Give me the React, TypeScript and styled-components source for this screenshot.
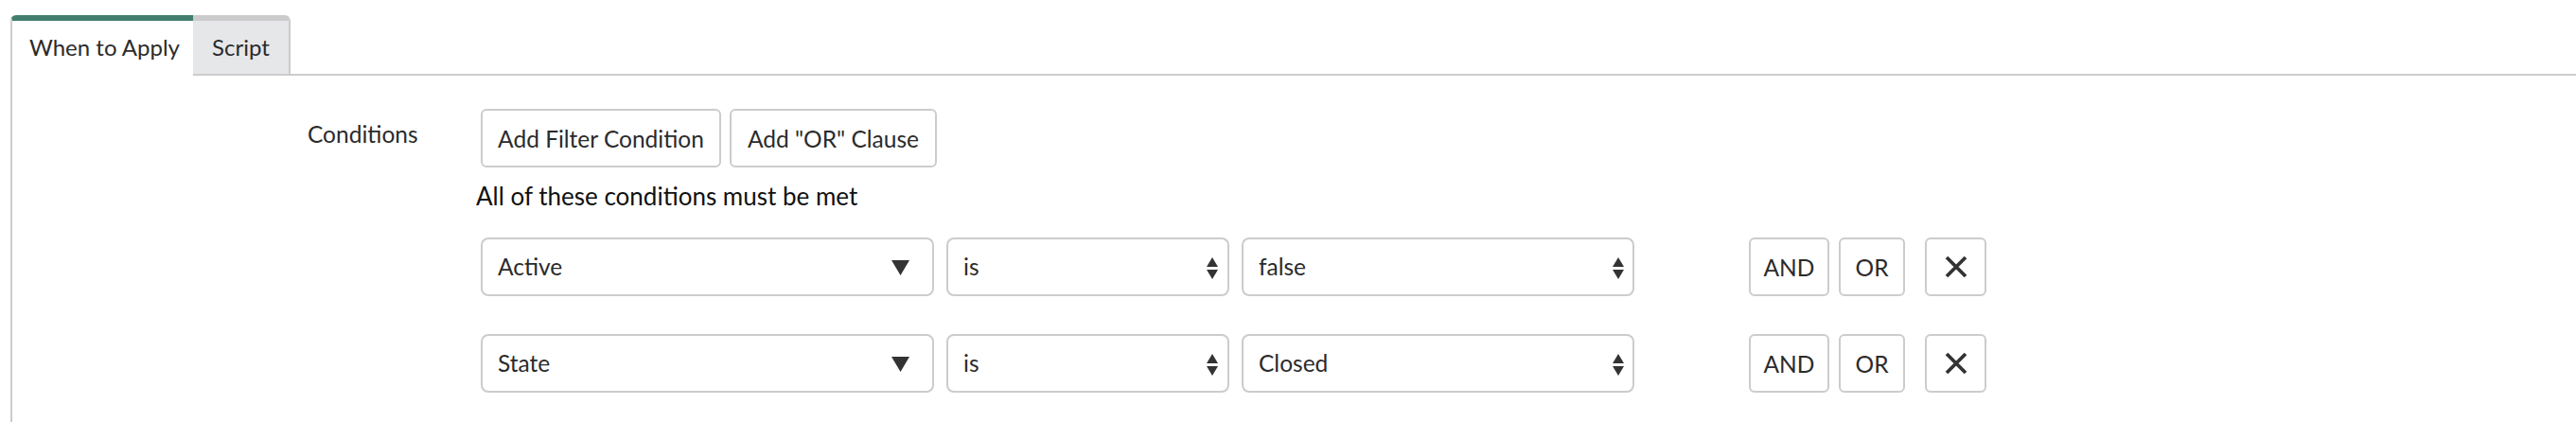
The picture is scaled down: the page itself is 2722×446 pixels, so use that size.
import styled, { createGlobalStyle } from 'styled-components';

const GlobalStyle = createGlobalStyle`
  html, body {
    margin: 0;
    background: #fff;
  }
  body {
    font-family: Lato, 'Open Sans', sans-serif;
    color: #2b2b2b;
  }
`;

interface Condition {
  field: string;
  operator: string;
  value: string;
}

const conditions: Condition[] = [
  { field: 'Active', operator: 'is', value: 'false' },
  { field: 'State', operator: 'is', value: 'Closed' },
];

const tabs = [
  { label: 'When to Apply', width: 193, active: true },
  { label: 'Script', width: 103, active: false },
];

function CaretDown() {
  return (
    <svg width='19' height='16' viewBox='0 0 19 16'>
      <path d='M0 0 H19 L9.5 16 Z' fill='#333' />
    </svg>
  );
}

function UpDown() {
  return (
    <svg width='12' height='23' viewBox='0 0 12 23'>
      <path d='M6 0 L12 10 H0 Z' fill='#333' />
      <path d='M0 13 H12 L6 23 Z' fill='#333' />
    </svg>
  );
}

function Cross() {
  return (
    <svg width='24' height='24' viewBox='0 0 24 24'>
      <path d='M2 2 L22 22 M22 2 L2 22' stroke='#333' strokeWidth='3.8' />
    </svg>
  );
}

export default function App() {
  return (
    <>
      <GlobalStyle />
      <Page>
        <TabBar>
          {tabs.map((tab) => (
            <Tab key={tab.label} $active={tab.active} $width={tab.width}>
              {tab.label}
            </Tab>
          ))}
          <TabFiller />
        </TabBar>

        <Panel>
          <Label>Conditions</Label>
          <Field>
            <ButtonRow>
              <Button $width={254}>Add Filter Condition</Button>
              <Button $width={219}>Add "OR" Clause</Button>
            </ButtonRow>
            <Hint>All of these conditions must be met</Hint>
            <Rows>
              {conditions.map((c) => (
                <ConditionRow key={c.field}>
                  <Select $width={479} $padRight={24}>
                    <span>{c.field}</span>
                    <CaretDown />
                  </Select>
                  <Select $width={299} $padRight={10}>
                    <span>{c.operator}</span>
                    <UpDown />
                  </Select>
                  <Select $width={415} $padRight={9}>
                    <span>{c.value}</span>
                    <UpDown />
                  </Select>
                  <Actions>
                    <Button $width={85}>AND</Button>
                    <Button $width={70}>OR</Button>
                    <DeleteButton>
                      <Cross />
                    </DeleteButton>
                  </Actions>
                </ConditionRow>
              ))}
            </Rows>
          </Field>
        </Panel>
      </Page>
    </>
  );
}

const Page = styled.div`
  box-sizing: border-box;
  height: 446px;
  padding: 16px 0 0 11px;
  display: flex;
  flex-direction: column;
  overflow: hidden;
`;

const TabBar = styled.div`
  display: flex;
  height: 64px;
`;

interface TabProps {
  $active: boolean;
  $width: number;
}

const Tab = styled.div<TabProps>`
  box-sizing: border-box;
  width: ${(p) => p.$width}px;
  height: 64px;
  display: flex;
  align-items: center;
  font-size: 24px;
  color: #2b2b2b;
  background: ${(p) => (p.$active ? '#fff' : '#e6e7e9')};
  border-top: 6px solid ${(p) => (p.$active ? '#417e6f' : '#cbcbcb')};
  border-left: ${(p) => (p.$active ? '2px solid #ccc' : 'none')};
  border-right: ${(p) => (p.$active ? 'none' : '2px solid #ccc')};
  border-bottom: ${(p) => (p.$active ? 'none' : '2px solid #ccc')};
  border-radius: ${(p) => (p.$active ? '6px 0 0 0' : '0 6px 0 0')};
  padding-left: ${(p) => (p.$active ? 18 : 20)}px;
  padding-bottom: ${(p) => (p.$active ? 3 : 1)}px;
`;

const TabFiller = styled.div`
  flex: 1;
  border-bottom: 2px solid #ccc;
`;

const Panel = styled.div`
  flex: 1;
  border-left: 2px solid #ccc;
  display: grid;
  grid-template-columns: 495px 1fr;
  align-items: start;
  padding-top: 35px;
`;

const Label = styled.div`
  padding: 11px 0 0 312px;
  font-size: 24.5px;
  line-height: 32px;
  color: #2b2b2b;
`;

const Field = styled.div`
  display: flex;
  flex-direction: column;
`;

const ButtonRow = styled.div`
  display: flex;
  gap: 9px;
`;

interface ButtonProps {
  $width: number;
}

const Button = styled.button<ButtonProps>`
  box-sizing: border-box;
  width: ${(p) => p.$width}px;
  height: 62px;
  padding: 0;
  display: flex;
  align-items: center;
  justify-content: center;
  background: #fff;
  border: 2px solid #ccc;
  border-radius: 6px;
  font-family: Lato, 'Open Sans', sans-serif;
  font-size: 24.5px;
  color: #2b2b2b;
`;

const DeleteButton = styled(Button).attrs({ $width: 65 })`
  margin-left: 11px;
`;

const Hint = styled.div`
  margin: 14px 0 0 -5px;
  font-size: 26px;
  line-height: 32px;
  color: #111;
`;

const Rows = styled.div`
  margin-top: 28px;
  display: flex;
  flex-direction: column;
  gap: 40px;
`;

const ConditionRow = styled.div`
  display: flex;
  align-items: center;
  gap: 13px;
`;

interface SelectProps {
  $width: number;
  $padRight: number;
}

const Select = styled.div<SelectProps>`
  box-sizing: border-box;
  width: ${(p) => p.$width}px;
  height: 62px;
  display: flex;
  align-items: center;
  justify-content: space-between;
  padding: 0 ${(p) => p.$padRight}px 2px 16px;
  border: 2px solid #ccc;
  border-radius: 8px;
  background: #fff;
  font-size: 24.5px;
  color: #2b2b2b;

  svg {
    margin-top: 4px;
  }
`;

const Actions = styled.div`
  display: flex;
  gap: 10px;
  margin-left: 108px;
`;
